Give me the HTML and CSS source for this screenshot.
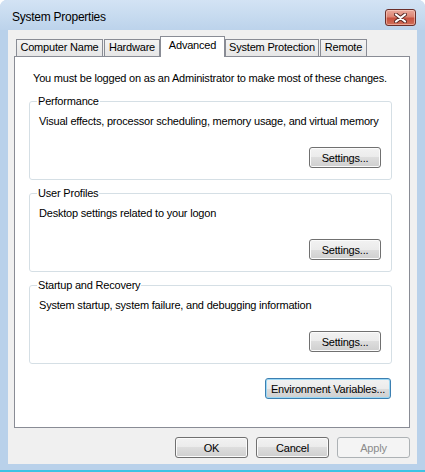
FILE: index.html
```html
<!DOCTYPE html>
<html lang="en">
<head>
    <meta charset="UTF-8">
    <title>System Properties</title>
    <link rel="stylesheet" href="styles.css">
</head>
<body>

<div class="window">
    <div class="titlebar">
        <span class="title">System Properties</span>
        <button class="close" aria-label="Close">
            <svg width="13" height="10" viewBox="0 0 13 10">
                <path d="M2 1.5 L11 8.5 M11 1.5 L2 8.5" stroke="#5a2a26" stroke-width="4" stroke-linecap="round"/>
                <path d="M2 1.5 L11 8.5 M11 1.5 L2 8.5" stroke="#ffffff" stroke-width="2.2" stroke-linecap="round"/>
            </svg>
        </button>
    </div>

    <div class="client">
        <div class="tabs">
            <div class="tab tab-computer">Computer Name</div>
            <div class="tab tab-hardware">Hardware</div>
            <div class="tab tab-advanced active">Advanced</div>
            <div class="tab tab-protection">System Protection</div>
            <div class="tab tab-remote">Remote</div>
        </div>

        <div class="panel">
            <p class="notice">You must be logged on as an Administrator to make most of these changes.</p>

            <fieldset class="group">
                <legend>Performance</legend>
                <p class="desc">Visual effects, processor scheduling, memory usage, and virtual memory</p>
                <div class="row"><button class="btn btn-settings">Settings...</button></div>
            </fieldset>

            <fieldset class="group">
                <legend>User Profiles</legend>
                <p class="desc">Desktop settings related to your logon</p>
                <div class="row"><button class="btn btn-settings">Settings...</button></div>
            </fieldset>

            <fieldset class="group">
                <legend>Startup and Recovery</legend>
                <p class="desc">System startup, system failure, and debugging information</p>
                <div class="row"><button class="btn btn-settings">Settings...</button></div>
            </fieldset>

            <div class="row env-row">
                <button class="btn btn-default btn-env">Environment Variables...</button>
            </div>
        </div>

        <div class="footer">
            <button class="btn btn-dialog">OK</button>
            <button class="btn btn-dialog">Cancel</button>
            <button class="btn btn-dialog" disabled>Apply</button>
        </div>
    </div>
</div>

</body>
</html>
```

FILE: styles.css
```css
* {
    box-sizing: border-box;
}
html, body {
    margin: 0;
    background: #ffffff;
}
body {
    font-family: "Liberation Sans", Arial, sans-serif;
    font-size: 11px;
    letter-spacing: -0.2px;
    color: #000;
}
.window {
    width: 425px;
    height: 472px;
    padding: 0 8px 6px;
    background: #b9d1ea;
    border-radius: 7px 7px 0 0;
    border-bottom: 2px solid #3cc3e4;
    overflow: hidden;
}
.titlebar {
    display: flex;
    align-items: flex-start;
    height: 30px;
    margin: 0 -8px;
    padding: 9px 9px 0 12px;
    background: linear-gradient(#d3e3f4, #bcd3eb);
}
.title {
    margin-top: 1px;
    font-size: 12px;
    line-height: 15px;
    letter-spacing: -0.25px;
}
.close {
    margin-left: auto;
    width: 31px;
    height: 17px;
    padding: 0;
    display: flex;
    align-items: center;
    justify-content: center;
    border: 1px solid #6b2f2a;
    border-radius: 3px;
    background: linear-gradient(#eaa99c 0%, #dc8574 45%, #c7513f 55%, #d0705a 100%);
    box-shadow: inset 0 0 0 1px rgba(255, 220, 210, 0.5);
}
.client {
    display: flex;
    flex-direction: column;
    height: 434px;
    padding: 6px 7px 0 6px;
    background: #f0f0f0;
}
.tabs {
    display: flex;
    align-items: flex-end;
    height: 21px;
    margin-bottom: -1px;
    padding-left: 2px;
    position: relative;
    z-index: 1;
}
.tab {
    height: 17px;
    margin-bottom: 1px;
    border: 1px solid #898c95;
    border-bottom: none;
    background: linear-gradient(#f3f3f3, #e6e6e6);
    text-align: center;
    line-height: 15px;
}
.tab.active {
    height: 21px;
    margin-bottom: 0;
    background: #ffffff;
    line-height: 17px;
}
.tab-computer { width: 87px; }
.tab-hardware { width: 56px; margin-left: 1px; }
.tab-advanced { width: 65px; }
.tab-protection { width: 94px; }
.tab-remote { width: 47px; margin-left: 1px; }

.panel {
    display: flex;
    flex-direction: column;
    height: 372px;
    padding: 14px 17px 0 14px;
    background: #ffffff;
    border: 1px solid #898c95;
}
.notice {
    margin: 0 0 8px;
    padding-left: 4px;
    line-height: 15px;
}
.group {
    margin: 0 0 6px;
    padding: 5px 10px 11px 9px;
    border: 1px solid #d5dfe5;
    border-radius: 3px;
}
.group legend {
    margin-left: -2px;
    padding: 0 1px;
    line-height: 15px;
}
.desc {
    margin: 0 0 18px;
    line-height: 15px;
}
.row {
    display: flex;
    justify-content: flex-end;
}
.env-row {
    margin-top: 8px;
    padding-right: 1px;
}
.btn {
    height: 21px;
    padding: 0;
    font: inherit;
    letter-spacing: inherit;
    color: #000;
    border: 1px solid #707070;
    border-radius: 3px;
    background: linear-gradient(#f2f2f2 0%, #ebebeb 50%, #dddddd 50%, #cfcfcf 100%);
    box-shadow: inset 0 0 0 1px #fbfbfb;
}
.btn-settings { width: 72px; }
.btn-env { width: 126px; }
.btn-dialog { width: 73px; }
.btn-default {
    border-color: #3c7fb1;
    box-shadow: inset 0 0 0 1px #9ad8f6;
}
.btn:disabled {
    color: #8b8b8b;
    border-color: #adb2b5;
    background: #f4f4f4;
    box-shadow: none;
}
.footer {
    display: flex;
    justify-content: flex-end;
    gap: 8px;
    padding-top: 9px;
}
```
